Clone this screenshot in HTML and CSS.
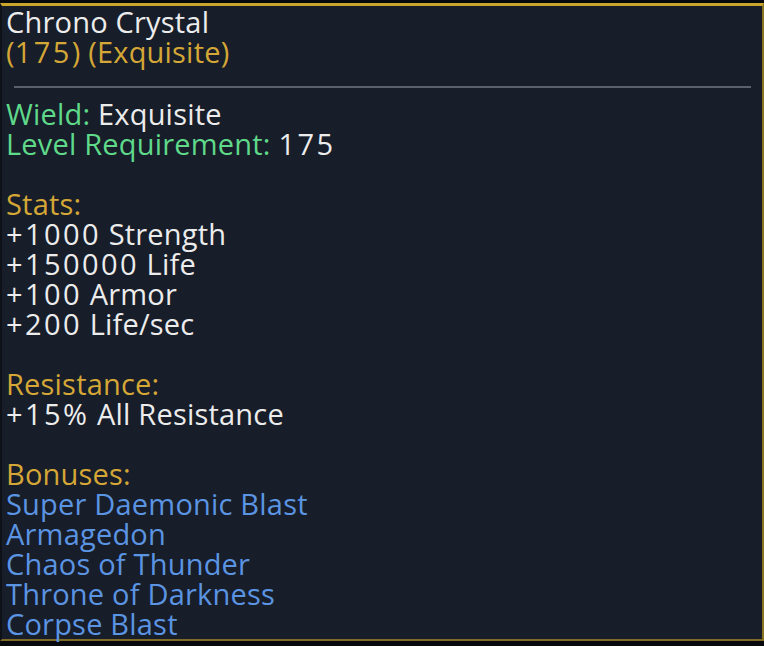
FILE: index.html
```html
<!DOCTYPE html>
<html lang="en">
<head>
<meta charset="utf-8">
<title>Chrono Crystal</title>
<link rel="stylesheet" href="styles.css">
</head>
<body>
<div class="frame">
  <div class="tooltip">
    <div class="line name">Chrono Crystal</div>
    <div class="line gold">(<span class="num">175</span>) (Exquisite)</div>
    <div class="sep"></div>
    <div class="line"><span class="green">Wield:</span> Exquisite</div>
    <div class="line"><span class="green">Level Requirement:</span> <span class="num">175</span></div>
    <div class="gap"></div>
    <div class="line gold">Stats:</div>
    <div class="line"><span class="num">+1000</span> Strength</div>
    <div class="line"><span class="num">+150000</span> Life</div>
    <div class="line"><span class="num">+100</span> Armor</div>
    <div class="line"><span class="num">+200</span> Life/sec</div>
    <div class="gap"></div>
    <div class="line gold">Resistance:</div>
    <div class="line"><span class="num">+15%</span> All Resistance</div>
    <div class="gap"></div>
    <div class="line gold">Bonuses:</div>
    <div class="line blue">Super Daemonic Blast</div>
    <div class="line blue">Armagedon</div>
    <div class="line blue">Chaos of Thunder</div>
    <div class="line blue">Throne of Darkness</div>
    <div class="line blue">Corpse Blast</div>
  </div>
</div>
</body>
</html>
```
FILE: styles.css
```css
html, body {
  margin: 0;
  padding: 0;
  background: #07090d;
}
.frame {
  width: 764px;
  height: 646px;
  padding-top: 3px;
  box-sizing: border-box;
}
.tooltip {
  box-sizing: border-box;
  width: 764px;
  height: 638px;
  background: #171d29;
  border-top: 3px solid #c9a52c;
  border-right: 2px solid #8a7424;
  border-bottom: 2px solid #7f6b25;
  border-left: 2px solid #0e1118;
  padding: 1px 0 0 4px;
  font-family: "Open Sans", "Lato", sans-serif;
  font-size: 29px;
  letter-spacing: 0.2px;
  line-height: 30px;
  color: #ececec;
}
.line {
  height: 30px;
  white-space: nowrap;
}
.num { letter-spacing: 2.4px; }
.gold { color: #d4a736; }
.green { color: #5fd98a; }
.blue { color: #5b94e2; }
.sep {
  height: 2px;
  background: #5a616d;
  margin: 19px 11px 11px 8px;
}
.gap { height: 30px; }
```
